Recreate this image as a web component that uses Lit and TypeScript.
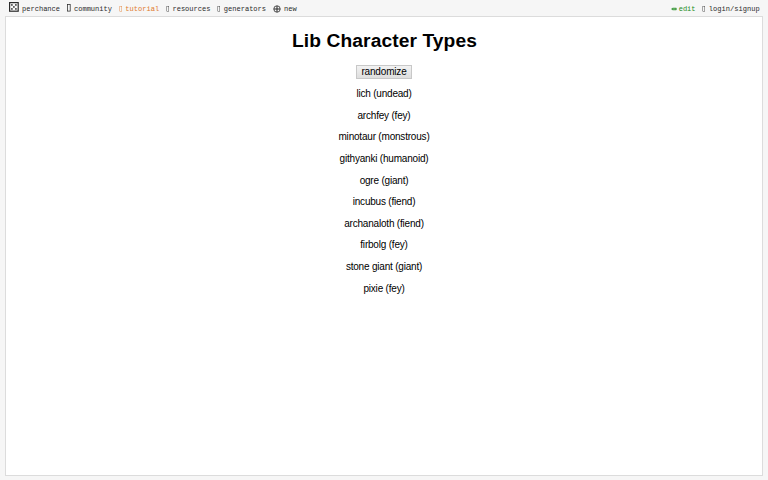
import { html, css, svg, LitElement } from 'lit';
import { customElement, property, state } from 'lit/decorators.js';

const icons: Record<string, unknown> = {
  dice: svg`<svg class="dice" viewBox="0 0 10 10" width="10" height="10">
    <rect x="0.6" y="0.6" width="8.6" height="8.6" fill="none" stroke="currentColor" stroke-width="1.2"/>
    <g fill="currentColor">
      <circle cx="2.9" cy="2.9" r="0.85"/><circle cx="6.9" cy="2.9" r="0.85"/>
      <circle cx="4.9" cy="4.9" r="0.85"/>
      <circle cx="2.9" cy="6.9" r="0.85"/><circle cx="6.9" cy="6.9" r="0.85"/>
    </g></svg>`,
  tall: svg`<svg class="tall" viewBox="0 0 4 8" width="4" height="8">
    <rect x="0.5" y="0.5" width="2.7" height="6.6" fill="none" stroke="currentColor" stroke-width="0.75"/></svg>`,
  box: svg`<svg class="box" viewBox="0 0 4 6" width="4" height="6">
    <rect x="0.8" y="0.4" width="2" height="4.8" fill="none" stroke="currentColor" stroke-width="0.4"/></svg>`,
  plus: svg`<svg class="plus" viewBox="0 0 8 8" width="8" height="8">
    <path d="M4 0.8V7.2M0.8 4H7.2" stroke="currentColor" stroke-width="1"/>
    <circle cx="4" cy="4" r="3.2" fill="none" stroke="currentColor" stroke-width="0.8"/></svg>`,
  pencil: svg`<svg class="pencil" viewBox="0 0 6 4" width="6" height="4">
    <path d="M0 2L1.7 0.8H5Q5.7 0.8 5.7 1.4V2.6Q5.7 3.2 5 3.2H1.7Z" fill="currentColor" opacity="0.85"/>
    <path d="M1.9 2H4.4" stroke="#f6f6f6" stroke-width="0.35"/></svg>`,
};

@customElement('menu-item')
export class MenuItem extends LitElement {
  static styles = css`
    :host {
      display: flex;
      align-items: center;
      height: 16px;
      white-space: pre;
    }

    svg {
      display: block;
      flex: none;
    }

    .dice {
      margin: 0 3px 2px 0;
    }

    .tall {
      margin: 0 3px 1px 0;
    }

    .box {
      margin: 2px 2.4px 0 0;
    }

    .plus {
      margin: 2px 3px 0 0;
    }

    .pencil {
      margin: 1px 2px 0 0;
    }

    .label {
      padding-top: 2px;
    }
  `;

  @property() icon = '';
  @property() label = '';

  render() {
    return html`${icons[this.icon]}<span class="label">${this.label}</span>`;
  }
}

@customElement('app-root')
export class AppRoot extends LitElement {
  static styles = css`
    :host {
      display: flex;
      flex-direction: column;
      box-sizing: border-box;
      width: 100vw;
      height: 100vh;
      overflow: hidden;
      padding: 0 5px 4px;
      background: #f6f6f6;
    }

    nav {
      display: flex;
      flex: none;
      height: 16px;
      padding: 0 3.4px 0 4px;
      font: 7.05px/8px "Liberation Mono", monospace;
      color: #2b2b2b;
    }

    .left,
    .right {
      display: flex;
      gap: 6.9px;
    }

    .right {
      margin-left: auto;
    }

    .orange {
      color: #e07b2e;
    }

    .green {
      color: #218c21;
    }

    main {
      flex: 1;
      box-sizing: border-box;
      border: 1px solid #dcdcdc;
      background: #fff;
      text-align: center;
      font: 10px/21.6px "Liberation Sans", Arial, sans-serif;
      letter-spacing: -0.2px;
      color: #000;
    }

    h1 {
      margin: 13px 0 13px;
      padding-left: 1px;
      font-size: 19.2px;
      line-height: 22px;
      letter-spacing: 0.1px;
    }

    button {
      display: block;
      box-sizing: border-box;
      width: 56px;
      height: 14px;
      margin: 0 auto 4.3px;
      padding: 0;
      border: 1px solid #c8c8c8;
      border-radius: 0;
      background: linear-gradient(#f2f2f2, #dedede);
      font: inherit;
      line-height: 12px;
      letter-spacing: -0.18px;
      color: #000;
    }
  `;

  @state() private characters = [
    'lich (undead)',
    'archfey (fey)',
    'minotaur (monstrous)',
    'githyanki (humanoid)',
    'ogre (giant)',
    'incubus (fiend)',
    'archanaloth (fiend)',
    'firbolg (fey)',
    'stone giant (giant)',
    'pixie (fey)',
  ];

  private randomize() {
    this.characters = [...this.characters].sort(() => Math.random() - 0.5);
  }

  render() {
    return html`
      <nav>
        <div class="left">
          <menu-item icon="dice" label="perchance"></menu-item>
          <menu-item icon="tall" label="community"></menu-item>
          <menu-item class="orange" icon="box" label="tutorial"></menu-item>
          <menu-item icon="box" label="resources"></menu-item>
          <menu-item icon="box" label="generators"></menu-item>
          <menu-item icon="plus" label="new"></menu-item>
        </div>
        <div class="right">
          <menu-item class="green" icon="pencil" label="edit"></menu-item>
          <menu-item icon="box" label="login/signup"></menu-item>
        </div>
      </nav>
      <main>
        <h1>Lib Character Types</h1>
        <button @click=${this.randomize}>randomize</button>
        ${this.characters.map((name) => html`<div>${name}</div>`)}
      </main>
    `;
  }
}
